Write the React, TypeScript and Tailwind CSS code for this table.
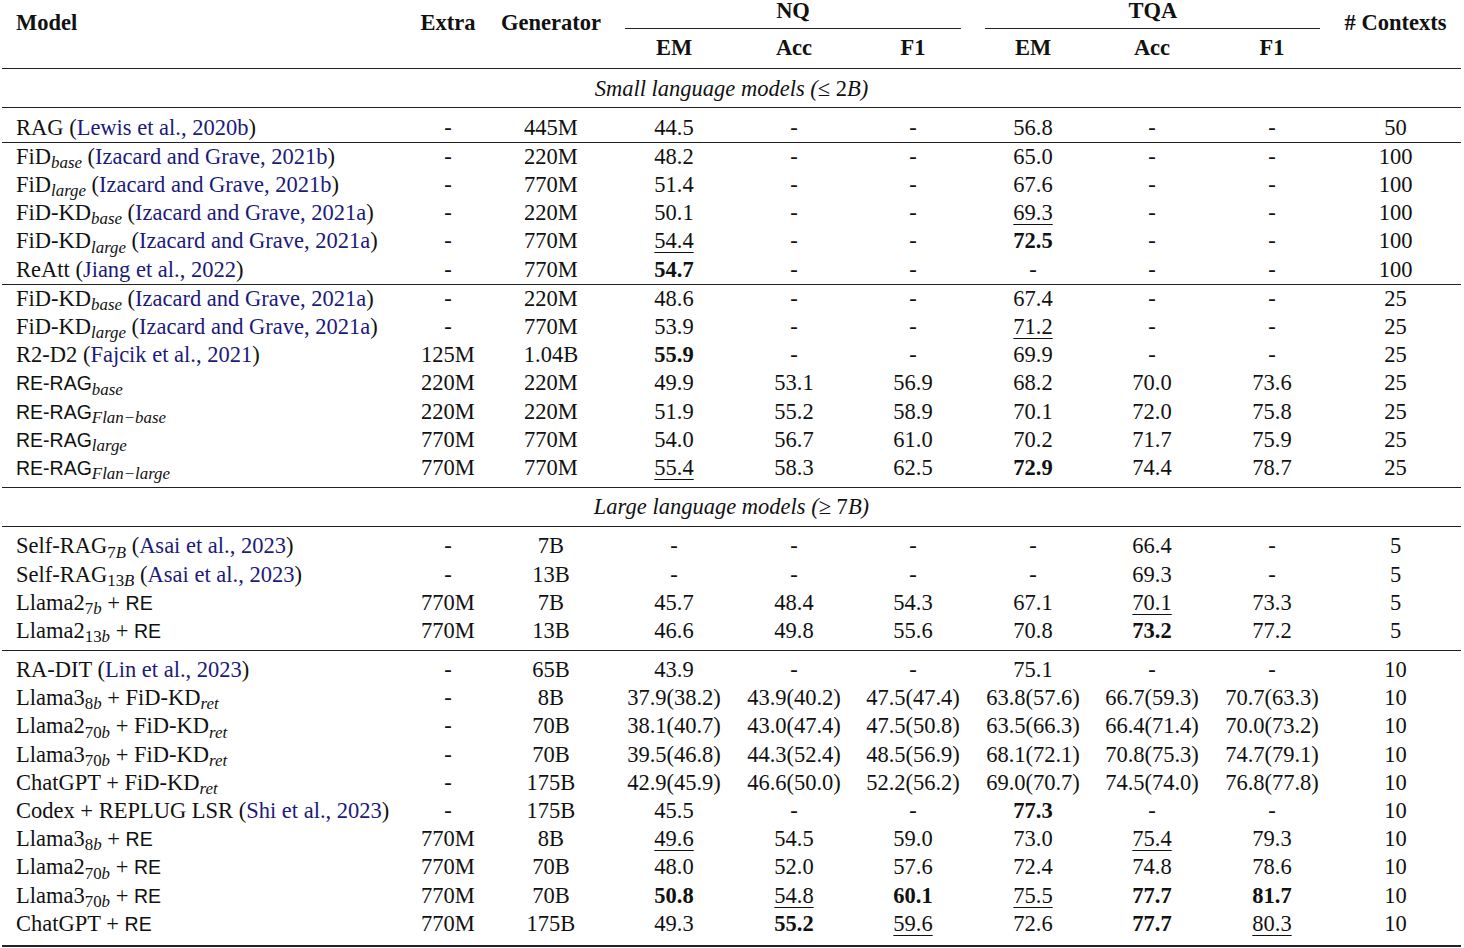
import type { ReactNode } from "react";

const cols =
  "grid grid-cols-[402px_88px_118px_128px_112px_126px_114px_124px_116px_131px]";

const serif = { fontFamily: '"Liberation Serif", "Times New Roman", serif' };

function Sub({ t }: { t: string }) {
  const parts = t.match(/\d+|[^\d]+/g) ?? [];
  return (
    <sub>
      {parts.map((p, i) =>
        /\d/.test(p) ? <span key={i}>{p}</span> : <i key={i}>{p}</i>
      )}
    </sub>
  );
}

function Cite({ children }: { children: ReactNode }) {
  return (
    <>
      (<span className="text-[#1c1a7a]">{children}</span>)
    </>
  );
}

function Sf({ children }: { children: ReactNode }) {
  return (
    <span
      className="text-[19.5px]"
      style={{ fontFamily: '"Liberation Sans", Arial, sans-serif' }}
    >
      {children}
    </span>
  );
}

function Value({ v }: { v: string }) {
  if (v.startsWith("*")) return <span className="font-bold">{v.slice(1)}</span>;
  if (v.startsWith("_"))
    return (
      <span className="underline decoration-1 underline-offset-[4px]">
        {v.slice(1)}
      </span>
    );
  return <span>{v}</span>;
}

type Row = [ReactNode, ...string[]];

function Rows({ rows }: { rows: Row[] }) {
  return (
    <>
      {rows.map(([model, ...vals], i) => (
        <div key={i} className={`${cols} leading-[28.2px] h-[28.2px]`}>
          <div className="pl-[14px] whitespace-nowrap">{model}</div>
          {vals.map((v, j) => (
            <div key={j} className="text-center whitespace-nowrap">
              <Value v={v} />
            </div>
          ))}
        </div>
      ))}
    </>
  );
}

const groupA: Row[] = [
  [<>RAG <Cite>Lewis et al., 2020b</Cite></>, "-", "445M", "44.5", "-", "-", "56.8", "-", "-", "50"],
];

const groupB: Row[] = [
  [<>FiD<Sub t="base" /> <Cite>Izacard and Grave, 2021b</Cite></>, "-", "220M", "48.2", "-", "-", "65.0", "-", "-", "100"],
  [<>FiD<Sub t="large" /> <Cite>Izacard and Grave, 2021b</Cite></>, "-", "770M", "51.4", "-", "-", "67.6", "-", "-", "100"],
  [<>FiD-KD<Sub t="base" /> <Cite>Izacard and Grave, 2021a</Cite></>, "-", "220M", "50.1", "-", "-", "_69.3", "-", "-", "100"],
  [<>FiD-KD<Sub t="large" /> <Cite>Izacard and Grave, 2021a</Cite></>, "-", "770M", "_54.4", "-", "-", "*72.5", "-", "-", "100"],
  [<>ReAtt <Cite>Jiang et al., 2022</Cite></>, "-", "770M", "*54.7", "-", "-", "-", "-", "-", "100"],
];

const groupC: Row[] = [
  [<>FiD-KD<Sub t="base" /> <Cite>Izacard and Grave, 2021a</Cite></>, "-", "220M", "48.6", "-", "-", "67.4", "-", "-", "25"],
  [<>FiD-KD<Sub t="large" /> <Cite>Izacard and Grave, 2021a</Cite></>, "-", "770M", "53.9", "-", "-", "_71.2", "-", "-", "25"],
  [<>R2-D2 <Cite>Fajcik et al., 2021</Cite></>, "125M", "1.04B", "*55.9", "-", "-", "69.9", "-", "-", "25"],
  [<><Sf>RE-RAG</Sf><Sub t="base" /></>, "220M", "220M", "49.9", "53.1", "56.9", "68.2", "70.0", "73.6", "25"],
  [<><Sf>RE-RAG</Sf><Sub t="Flan−base" /></>, "220M", "220M", "51.9", "55.2", "58.9", "70.1", "72.0", "75.8", "25"],
  [<><Sf>RE-RAG</Sf><Sub t="large" /></>, "770M", "770M", "54.0", "56.7", "61.0", "70.2", "71.7", "75.9", "25"],
  [<><Sf>RE-RAG</Sf><Sub t="Flan−large" /></>, "770M", "770M", "_55.4", "58.3", "62.5", "*72.9", "74.4", "78.7", "25"],
];

const groupD: Row[] = [
  [<>Self-RAG<Sub t="7B" /> <Cite>Asai et al., 2023</Cite></>, "-", "7B", "-", "-", "-", "-", "66.4", "-", "5"],
  [<>Self-RAG<Sub t="13B" /> <Cite>Asai et al., 2023</Cite></>, "-", "13B", "-", "-", "-", "-", "69.3", "-", "5"],
  [<>Llama2<Sub t="7b" /> + <Sf>RE</Sf></>, "770M", "7B", "45.7", "48.4", "54.3", "67.1", "_70.1", "73.3", "5"],
  [<>Llama2<Sub t="13b" /> + <Sf>RE</Sf></>, "770M", "13B", "46.6", "49.8", "55.6", "70.8", "*73.2", "77.2", "5"],
];

const groupE: Row[] = [
  [<>RA-DIT <Cite>Lin et al., 2023</Cite></>, "-", "65B", "43.9", "-", "-", "75.1", "-", "-", "10"],
  [<>Llama3<Sub t="8b" /> + FiD-KD<Sub t="ret" /></>, "-", "8B", "37.9(38.2)", "43.9(40.2)", "47.5(47.4)", "63.8(57.6)", "66.7(59.3)", "70.7(63.3)", "10"],
  [<>Llama2<Sub t="70b" /> + FiD-KD<Sub t="ret" /></>, "-", "70B", "38.1(40.7)", "43.0(47.4)", "47.5(50.8)", "63.5(66.3)", "66.4(71.4)", "70.0(73.2)", "10"],
  [<>Llama3<Sub t="70b" /> + FiD-KD<Sub t="ret" /></>, "-", "70B", "39.5(46.8)", "44.3(52.4)", "48.5(56.9)", "68.1(72.1)", "70.8(75.3)", "74.7(79.1)", "10"],
  [<>ChatGPT + FiD-KD<Sub t="ret" /></>, "-", "175B", "42.9(45.9)", "46.6(50.0)", "52.2(56.2)", "69.0(70.7)", "74.5(74.0)", "76.8(77.8)", "10"],
  [<>Codex + REPLUG LSR <Cite>Shi et al., 2023</Cite></>, "-", "175B", "45.5", "-", "-", "*77.3", "-", "-", "10"],
  [<>Llama3<Sub t="8b" /> + <Sf>RE</Sf></>, "770M", "8B", "_49.6", "54.5", "59.0", "73.0", "_75.4", "79.3", "10"],
  [<>Llama2<Sub t="70b" /> + <Sf>RE</Sf></>, "770M", "70B", "48.0", "52.0", "57.6", "72.4", "74.8", "78.6", "10"],
  [<>Llama3<Sub t="70b" /> + <Sf>RE</Sf></>, "770M", "70B", "*50.8", "_54.8", "*60.1", "_75.5", "*77.7", "*81.7", "10"],
  [<>ChatGPT + <Sf>RE</Sf></>, "770M", "175B", "49.3", "*55.2", "_59.6", "72.6", "*77.7", "_80.3", "10"],
];

function SectionLabel({ children }: { children: ReactNode }) {
  return (
    <div className="pt-[5.5px] pb-[4.5px] border-b border-[#222]">
      <div className="h-[28.2px] leading-[28.2px] text-center italic">
        {children}
      </div>
    </div>
  );
}

function Header() {
  return (
    <div
      className={`${cols} grid-rows-[29px_39px] font-bold border-b border-[#222]`}
    >
      <div className="row-span-2 pl-[14px] pt-[9px] leading-[28px]">Model</div>
      <div className="row-span-2 pt-[9px] leading-[28px] text-center">Extra</div>
      <div className="row-span-2 pt-[9px] leading-[28px] text-center">
        Generator
      </div>
      <div className="col-span-3">
        <div className="h-[21px] leading-[22px] text-center">NQ</div>
        <div className="mt-[7px] ml-[15px] mr-[15px] border-t border-[#222]" />
      </div>
      <div className="col-span-3">
        <div className="h-[21px] leading-[22px] text-center">TQA</div>
        <div className="mt-[7px] ml-[9px] mr-[10px] border-t border-[#222]" />
      </div>
      <div className="row-span-2 pt-[9px] leading-[28px] text-center">
        # Contexts
      </div>
      {["EM", "Acc", "F1", "EM", "Acc", "F1"].map((h, i) => (
        <div key={i} className="pt-[5px] leading-[28px] text-center">
          {h}
        </div>
      ))}
    </div>
  );
}

export default function App() {
  return (
    <div className="w-[1464px] h-[948px] bg-white overflow-hidden">
      <div
        className="ml-[2px] w-[1459px] text-[22.5px] text-[#111]"
        style={serif}
      >
        <Header />
        <SectionLabel>
          Small language models (<span className="not-italic">≤ 2</span>B)
        </SectionLabel>
        <div className="pt-[5.5px] border-b border-[#222]">
          <Rows rows={groupA} />
        </div>
        <div className="border-b border-[#222]">
          <Rows rows={groupB} />
        </div>
        <div className="pb-[4.5px] border-b border-[#222]">
          <Rows rows={groupC} />
        </div>
        <SectionLabel>
          Large language models (<span className="not-italic">≥ 7</span>B)
        </SectionLabel>
        <div className="pt-[5.5px] pb-[4.5px] border-b border-[#222]">
          <Rows rows={groupD} />
        </div>
        <div className="pt-[5.5px] pb-[7px] border-b-2 border-[#222]">
          <Rows rows={groupE} />
        </div>
      </div>
    </div>
  );
}
